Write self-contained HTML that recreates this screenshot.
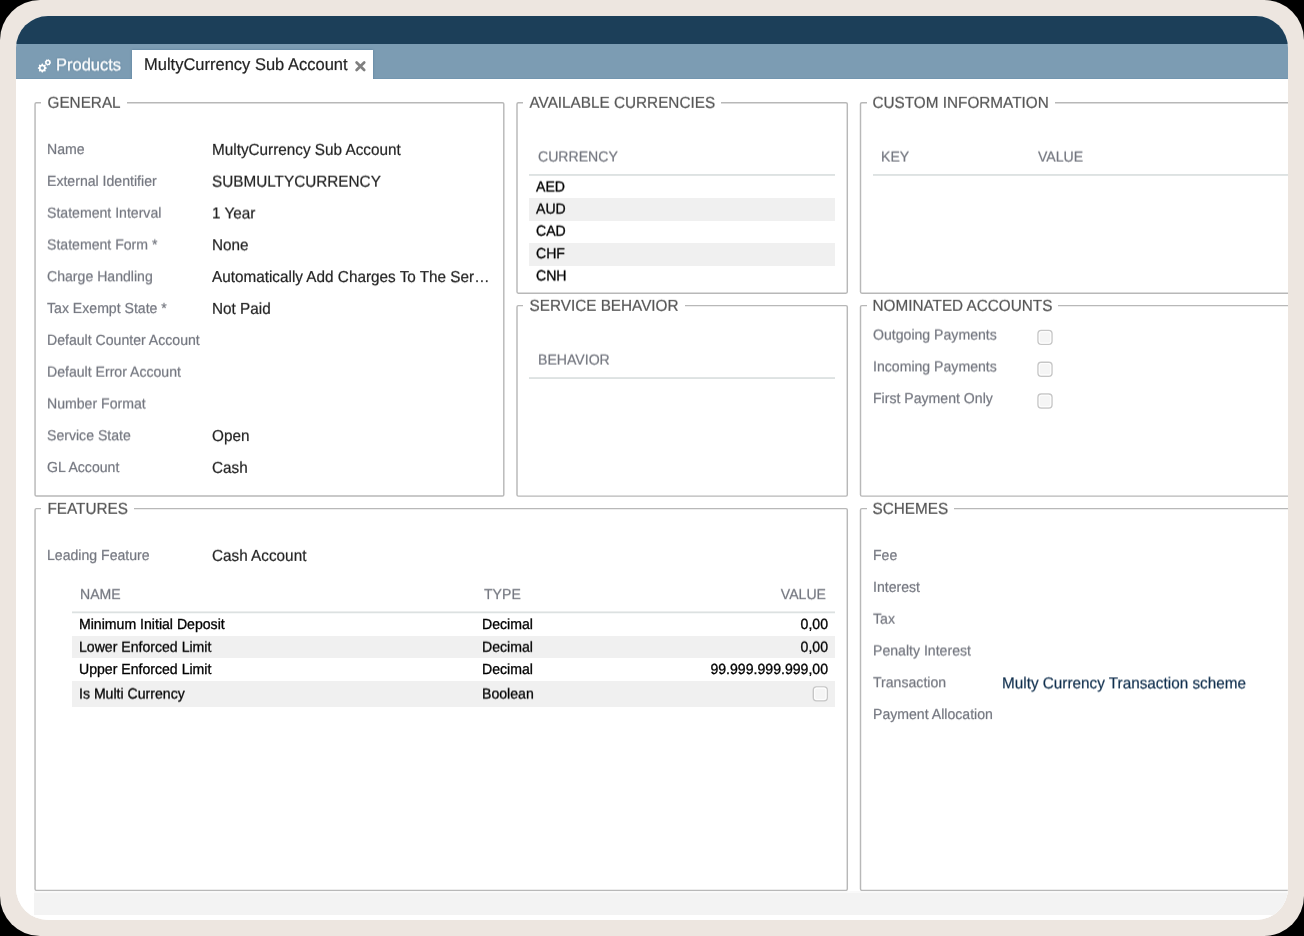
<!DOCTYPE html>
<html>
<head>
<meta charset="utf-8">
<title>MultyCurrency Sub Account</title>
<style>
*{box-sizing:border-box;margin:0;padding:0}
html,body{width:1304px;height:936px;overflow:hidden;background:#000;}
body{font-family:"Liberation Sans",sans-serif;position:relative;text-rendering:geometricPrecision;}
#outer{position:absolute;left:0;top:0;width:1304px;height:936px;background:#ede6e0;border-radius:40px;}
#app{position:absolute;left:16px;top:16px;width:1272px;height:904px;background:#fff;border-radius:32px;overflow:hidden;}
#pg{position:absolute;left:-16px;top:-16px;width:1304px;height:936px;will-change:transform;}
#topbar{position:absolute;left:16px;top:16px;width:1272px;height:28px;background:#1c3f59;}
#tabbar{position:absolute;left:16px;top:44px;width:1272px;height:35px;background:#7c9cb3;border-bottom:1px solid #7396b0;}
.a{position:absolute;white-space:nowrap;}
#tab1{transform-origin:50% 76%;color:#fff;font-size:16.5px;line-height:20px;text-shadow:0 0 2px rgba(40,85,120,.55);-webkit-text-stroke:0.3px currentColor;}
#tab2{left:132px;top:50px;width:241px;height:29px;background:#fff;box-shadow:0 0 2px rgba(45,90,130,.5);}
#tab2t{transform-origin:50% 76%;color:#222;font-size:16.5px;line-height:20px;-webkit-text-stroke:0.2px currentColor;}
.fs{position:absolute;border:1px solid #b9b9b9;}
.lg{transform-origin:50% 78%;position:absolute;white-space:nowrap;background:#fff;color:#555;font-size:15.3px;line-height:18px;padding:0 6px 0 6.5px;-webkit-text-stroke:0.2px currentColor;}
.lb{transform-origin:50% 76%;position:absolute;white-space:nowrap;color:#73767f;font-size:14.1px;line-height:18px;-webkit-text-stroke:0.2px currentColor;}
.vl{transform-origin:50% 78%;position:absolute;white-space:nowrap;color:#222;font-size:15.3px;line-height:18px;-webkit-text-stroke:0.2px currentColor;}
.th{transform-origin:50% 76%;position:absolute;white-space:nowrap;color:#73767f;font-size:14.1px;line-height:18px;-webkit-text-stroke:0.2px currentColor;}
.td{transform-origin:50% 76%;position:absolute;white-space:nowrap;color:#000;font-size:14.1px;line-height:18px;-webkit-text-stroke:0.32px currentColor;}
.hl{position:absolute;height:1px;background:#d3dada;}
.row{position:absolute;background:#f0f0f0;}
.cb{position:absolute;width:14px;height:14px;border:1px solid #c6c6c6;border-radius:3px;background:#f5f5f5;}
#foot{position:absolute;left:34.2px;top:891.4px;width:1254px;height:23.3px;background:linear-gradient(#f9f9f9 0,#f9f9f9 1.5px,#f3f3f3 1.6px);}
</style>
</head>
<body>
<div id="outer"></div>
<div id="app"><div id="pg">
<div id="topbar"></div><div id="tabbar"></div>
<div class="a" id="tab1" style="left:55.5px;top:55px;transform:translate3d(0,0.9px,0) rotate(0.02deg) scaleY(1.03);will-change:transform;">Products</div>
<div class="a" id="tab2"></div>
<div class="a" style="left:16px;top:79px;width:1272px;height:841px;background:#fff;"></div>
<div class="a" id="tab2t" style="left:143.7px;top:55px;transform:translate3d(0,0.5px,0) rotate(0.02deg) scaleY(1.03);will-change:transform;">MultyCurrency Sub Account</div>
<svg class="a" style="left:32px;top:52px;" width="30" height="24" viewBox="32 52 30 24" fill="#fff"><path fill-rule="evenodd" d="M46.78,67.66 L46.78,68.54 L45.65,69.12 L45.39,69.75 L45.78,70.95 L45.15,71.58 L43.95,71.19 L43.32,71.45 L42.74,72.58 L41.86,72.58 L41.28,71.45 L40.65,71.19 L39.45,71.58 L38.82,70.95 L39.21,69.75 L38.95,69.12 L37.82,68.54 L37.82,67.66 L38.95,67.08 L39.21,66.45 L38.82,65.25 L39.45,64.62 L40.65,65.01 L41.28,64.75 L41.86,63.62 L42.74,63.62 L43.32,64.75 L43.95,65.01 L45.15,64.62 L45.78,65.25 L45.39,66.45 L45.65,67.08Z M40.55,68.10 a1.75,1.75 0 1,0 3.50,0 a1.75,1.75 0 1,0 -3.50,0Z"/><path fill-rule="evenodd" d="M51.03,62.72 L50.91,63.33 L50.32,63.71 L50.02,64.15 L49.89,64.84 L49.37,65.18 L48.69,65.03 L48.16,65.14 L47.58,65.53 L46.97,65.41 L46.59,64.82 L46.15,64.52 L45.46,64.39 L45.12,63.87 L45.27,63.19 L45.16,62.66 L44.77,62.08 L44.89,61.47 L45.48,61.09 L45.78,60.65 L45.91,59.96 L46.43,59.62 L47.11,59.77 L47.64,59.66 L48.22,59.27 L48.83,59.39 L49.21,59.98 L49.65,60.28 L50.34,60.41 L50.68,60.93 L50.53,61.61 L50.64,62.14Z M46.65,62.40 a1.25,1.25 0 1,0 2.50,0 a1.25,1.25 0 1,0 -2.50,0Z"/></svg>
<svg class="a" style="left:350px;top:56px;" width="20" height="20" viewBox="350 56 20 20"><path d="M356.6 62.5 L364.2 70.0 M364.2 62.5 L356.6 70.0" stroke="#808080" stroke-width="2.7" stroke-linecap="round" fill="none"/></svg>
<svg class="a" style="left:0;top:0;" width="1304" height="936"><rect x="35.05" y="102.7" width="468.75" height="393.40" rx="1.4" fill="none" stroke="#b8b8b8" stroke-width="1.45"/></svg>
<div class="lg" style="left:41px;top:94px;transform:translate3d(0,0.4px,0) rotate(0.02deg) scaleY(1.04);will-change:transform;padding-left:6.5px;">GENERAL</div>
<div class="lb" style="left:47.4px;top:139px;transform:translate3d(0,0.65px,0) rotate(0.02deg) scaleY(1.04);will-change:transform;">Name</div>
<div class="vl" style="left:212px;top:141px;transform:translate3d(0,0.45px,0) rotate(0.02deg) scaleY(1.04);will-change:transform;">MultyCurrency Sub Account</div>
<div class="lb" style="left:47.4px;top:171px;transform:translate3d(0,0.45px,0) rotate(0.02deg) scaleY(1.04);will-change:transform;">External Identifier</div>
<div class="vl" style="left:212px;top:173px;transform:translate3d(0,0.25px,0) rotate(0.02deg) scaleY(1.04);will-change:transform;">SUBMULTYCURRENCY</div>
<div class="lb" style="left:47.4px;top:203px;transform:translate3d(0,0.25px,0) rotate(0.02deg) scaleY(1.04);will-change:transform;">Statement Interval</div>
<div class="vl" style="left:212px;top:205px;transform:translate3d(0,0.05px,0) rotate(0.02deg) scaleY(1.04);will-change:transform;">1 Year</div>
<div class="lb" style="left:47.4px;top:235px;transform:translate3d(0,0.05px,0) rotate(0.02deg) scaleY(1.04);will-change:transform;">Statement Form *</div>
<div class="vl" style="left:212px;top:236px;transform:translate3d(0,0.85px,0) rotate(0.02deg) scaleY(1.04);will-change:transform;">None</div>
<div class="lb" style="left:47.4px;top:266px;transform:translate3d(0,0.85px,0) rotate(0.02deg) scaleY(1.04);will-change:transform;">Charge Handling</div>
<div class="vl" style="left:212px;top:268px;transform:translate3d(0,0.65px,0) rotate(0.02deg) scaleY(1.04);will-change:transform;">Automatically Add Charges To The Ser…</div>
<div class="lb" style="left:47.4px;top:298px;transform:translate3d(0,0.65px,0) rotate(0.02deg) scaleY(1.04);will-change:transform;">Tax Exempt State *</div>
<div class="vl" style="left:212px;top:300px;transform:translate3d(0,0.45px,0) rotate(0.02deg) scaleY(1.04);will-change:transform;">Not Paid</div>
<div class="lb" style="left:47.4px;top:330px;transform:translate3d(0,0.45px,0) rotate(0.02deg) scaleY(1.04);will-change:transform;">Default Counter Account</div>
<div class="lb" style="left:47.4px;top:362px;transform:translate3d(0,0.25px,0) rotate(0.02deg) scaleY(1.04);will-change:transform;">Default Error Account</div>
<div class="lb" style="left:47.4px;top:394px;transform:translate3d(0,0.05px,0) rotate(0.02deg) scaleY(1.04);will-change:transform;">Number Format</div>
<div class="lb" style="left:47.4px;top:425px;transform:translate3d(0,0.85px,0) rotate(0.02deg) scaleY(1.04);will-change:transform;">Service State</div>
<div class="vl" style="left:212px;top:427px;transform:translate3d(0,0.65px,0) rotate(0.02deg) scaleY(1.04);will-change:transform;">Open</div>
<div class="lb" style="left:47.4px;top:457px;transform:translate3d(0,0.65px,0) rotate(0.02deg) scaleY(1.04);will-change:transform;">GL Account</div>
<div class="vl" style="left:212px;top:459px;transform:translate3d(0,0.45px,0) rotate(0.02deg) scaleY(1.04);will-change:transform;">Cash</div>
<svg class="a" style="left:0;top:0;" width="1304" height="936"><rect x="517.0" y="102.7" width="330.30" height="190.50" rx="1.4" fill="none" stroke="#b8b8b8" stroke-width="1.45"/></svg>
<div class="lg" style="left:523px;top:94px;transform:translate3d(0,0.4px,0) rotate(0.02deg) scaleY(1.04);will-change:transform;padding-left:6.5px;">AVAILABLE CURRENCIES</div>
<div class="th" style="left:537.8px;top:147px;transform:translate3d(0,0.05px,0) rotate(0.02deg) scaleY(1.04);will-change:transform;">CURRENCY</div>
<svg class="a" style="left:0;top:171px;" width="1304" height="7" viewBox="0 171 1304 7"><rect x="529" y="174.05" width="306" height="1.8" fill="#dce1e1"/></svg>
<div class="td" style="left:536.2px;top:177px;transform:translate3d(0,0.05px,0) rotate(0.02deg) scaleY(1.04);will-change:transform;">AED</div>
<div class="row" style="left:529px;top:198px;width:306px;height:22.5px;"></div>
<div class="td" style="left:536.2px;top:199px;transform:translate3d(0,0.15px,0) rotate(0.02deg) scaleY(1.04);will-change:transform;text-shadow:0 0 1.5px #fff,0 0 1.5px #fff;">AUD</div>
<div class="td" style="left:536.2px;top:221px;transform:translate3d(0,0.25px,0) rotate(0.02deg) scaleY(1.04);will-change:transform;">CAD</div>
<div class="row" style="left:529px;top:243px;width:306px;height:22.5px;"></div>
<div class="td" style="left:536.2px;top:243px;transform:translate3d(0,0.85px,0) rotate(0.02deg) scaleY(1.04);will-change:transform;text-shadow:0 0 1.5px #fff,0 0 1.5px #fff;">CHF</div>
<div class="td" style="left:536.2px;top:266px;transform:translate3d(0,0.05px,0) rotate(0.02deg) scaleY(1.04);will-change:transform;">CNH</div>
<svg class="a" style="left:0;top:0;" width="1304" height="936"><rect x="860.5" y="102.7" width="469.50" height="190.50" rx="1.4" fill="none" stroke="#b8b8b8" stroke-width="1.45"/></svg>
<div class="lg" style="left:867px;top:94px;transform:translate3d(0,0.4px,0) rotate(0.02deg) scaleY(1.04);will-change:transform;padding-left:5.5px;">CUSTOM INFORMATION</div>
<div class="th" style="left:881px;top:147px;transform:translate3d(0,0.15px,0) rotate(0.02deg) scaleY(1.04);will-change:transform;">KEY</div>
<div class="th" style="left:1038px;top:147px;transform:translate3d(0,0.15px,0) rotate(0.02deg) scaleY(1.04);will-change:transform;">VALUE</div>
<svg class="a" style="left:0;top:171px;" width="1304" height="7" viewBox="0 171 1304 7"><rect x="873" y="174.05" width="427" height="1.8" fill="#dce1e1"/></svg>
<svg class="a" style="left:0;top:0;" width="1304" height="936"><rect x="517.0" y="305.6" width="330.30" height="190.50" rx="1.4" fill="none" stroke="#b8b8b8" stroke-width="1.45"/></svg>
<div class="lg" style="left:523px;top:297px;transform:translate3d(0,0.4px,0) rotate(0.02deg) scaleY(1.04);will-change:transform;padding-left:6.5px;">SERVICE BEHAVIOR</div>
<div class="th" style="left:537.7px;top:350px;transform:translate3d(0,0.15px,0) rotate(0.02deg) scaleY(1.04);will-change:transform;">BEHAVIOR</div>
<svg class="a" style="left:0;top:375px;" width="1304" height="7" viewBox="0 375 1304 7"><rect x="529" y="377.15" width="306" height="1.8" fill="#dce1e1"/></svg>
<svg class="a" style="left:0;top:0;" width="1304" height="936"><rect x="860.5" y="305.6" width="469.50" height="190.50" rx="1.4" fill="none" stroke="#b8b8b8" stroke-width="1.45"/></svg>
<div class="lg" style="left:867px;top:297px;transform:translate3d(0,0.4px,0) rotate(0.02deg) scaleY(1.04);will-change:transform;padding-left:5.5px;">NOMINATED ACCOUNTS</div>
<div class="lb" style="left:873.05px;top:325px;transform:translate3d(0,0.15px,0) rotate(0.02deg) scaleY(1.04);will-change:transform;">Outgoing Payments</div>
<svg class="a" style="left:1035px;top:327px;" width="22" height="22" viewBox="1035 327 22 22"><rect x="1038.0" y="330.4" width="14" height="14" rx="3.3" fill="#f5f5f5" stroke="#c6c6c6" stroke-width="1.4"/><rect x="1039.3" y="331.7" width="11.4" height="11.4" rx="2.2" fill="none" stroke="#fff" stroke-opacity=".85" stroke-width="1.1"/></svg>
<div class="lb" style="left:873.05px;top:357px;transform:translate3d(0,0px,0) rotate(0.02deg) scaleY(1.04);will-change:transform;">Incoming Payments</div>
<svg class="a" style="left:1035px;top:359px;" width="22" height="22" viewBox="1035 359 22 22"><rect x="1038.0" y="362.2" width="14" height="14" rx="3.3" fill="#f5f5f5" stroke="#c6c6c6" stroke-width="1.4"/><rect x="1039.3" y="363.5" width="11.4" height="11.4" rx="2.2" fill="none" stroke="#fff" stroke-opacity=".85" stroke-width="1.1"/></svg>
<div class="lb" style="left:873.05px;top:388px;transform:translate3d(0,0.75px,0) rotate(0.02deg) scaleY(1.04);will-change:transform;">First Payment Only</div>
<svg class="a" style="left:1035px;top:391px;" width="22" height="22" viewBox="1035 391 22 22"><rect x="1038.0" y="394.0" width="14" height="14" rx="3.3" fill="#f5f5f5" stroke="#c6c6c6" stroke-width="1.4"/><rect x="1039.3" y="395.3" width="11.4" height="11.4" rx="2.2" fill="none" stroke="#fff" stroke-opacity=".85" stroke-width="1.1"/></svg>
<svg class="a" style="left:0;top:0;" width="1304" height="936"><rect x="35.05" y="508.6" width="812.25" height="381.80" rx="1.4" fill="none" stroke="#b8b8b8" stroke-width="1.45"/></svg>
<div class="lg" style="left:41px;top:500px;transform:translate3d(0,0.4px,0) rotate(0.02deg) scaleY(1.04);will-change:transform;padding-left:6.5px;">FEATURES</div>
<div class="lb" style="left:47.4px;top:545px;transform:translate3d(0,0.65px,0) rotate(0.02deg) scaleY(1.04);will-change:transform;">Leading Feature</div>
<div class="vl" style="left:212px;top:547px;transform:translate3d(0,0.45px,0) rotate(0.02deg) scaleY(1.04);will-change:transform;">Cash Account</div>
<div class="th" style="left:80px;top:584px;transform:translate3d(0,0.75px,0) rotate(0.02deg) scaleY(1.04);will-change:transform;">NAME</div>
<div class="th" style="left:484px;top:584px;transform:translate3d(0,0.75px,0) rotate(0.02deg) scaleY(1.04);will-change:transform;">TYPE</div>
<div class="th" style="left:700px;top:584px;transform:translate3d(0,0.75px,0) rotate(0.02deg) scaleY(1.04);will-change:transform;width:126px;text-align:right;">VALUE</div>
<svg class="a" style="left:0;top:609px;" width="1304" height="7" viewBox="0 609 1304 7"><rect x="72" y="611.45" width="763" height="1.8" fill="#dce1e1"/></svg>
<div class="td" style="left:79px;top:614px;transform:translate3d(0,0.55px,0) rotate(0.02deg) scaleY(1.04);will-change:transform;">Minimum Initial Deposit</div>
<div class="td" style="left:482px;top:614px;transform:translate3d(0,0.55px,0) rotate(0.02deg) scaleY(1.04);will-change:transform;">Decimal</div>
<div class="td" style="left:628px;top:614px;transform:translate3d(0,0.55px,0) rotate(0.02deg) scaleY(1.04);will-change:transform;width:200px;text-align:right;">0,00</div>
<div class="row" style="left:72px;top:635.5px;width:763px;height:22.5px;"></div>
<div class="td" style="left:79px;top:637px;transform:translate3d(0,0.35px,0) rotate(0.02deg) scaleY(1.04);will-change:transform;text-shadow:0 0 1.5px #fff,0 0 1.5px #fff;">Lower Enforced Limit</div>
<div class="td" style="left:482px;top:637px;transform:translate3d(0,0.35px,0) rotate(0.02deg) scaleY(1.04);will-change:transform;text-shadow:0 0 1.5px #fff,0 0 1.5px #fff;">Decimal</div>
<div class="td" style="left:628px;top:637px;transform:translate3d(0,0.35px,0) rotate(0.02deg) scaleY(1.04);will-change:transform;width:200px;text-align:right;text-shadow:0 0 1.5px #fff,0 0 1.5px #fff;">0,00</div>
<div class="td" style="left:79px;top:659px;transform:translate3d(0,0.55px,0) rotate(0.02deg) scaleY(1.04);will-change:transform;">Upper Enforced Limit</div>
<div class="td" style="left:482px;top:659px;transform:translate3d(0,0.55px,0) rotate(0.02deg) scaleY(1.04);will-change:transform;">Decimal</div>
<div class="td" style="left:628px;top:659px;transform:translate3d(0,0.55px,0) rotate(0.02deg) scaleY(1.04);will-change:transform;width:200px;text-align:right;">99.999.999.999,00</div>
<div class="row" style="left:72px;top:681px;width:763px;height:25.5px;"></div>
<div class="td" style="left:79px;top:684px;transform:translate3d(0,0.15px,0) rotate(0.02deg) scaleY(1.04);will-change:transform;text-shadow:0 0 1.5px #fff,0 0 1.5px #fff;">Is Multi Currency</div>
<div class="td" style="left:482px;top:684px;transform:translate3d(0,0.15px,0) rotate(0.02deg) scaleY(1.04);will-change:transform;text-shadow:0 0 1.5px #fff,0 0 1.5px #fff;">Boolean</div>
<svg class="a" style="left:810px;top:683px;" width="22" height="22" viewBox="810 683 22 22"><rect x="813.3" y="686.85" width="14" height="14" rx="3.3" fill="#f5f5f5" stroke="#c6c6c6" stroke-width="1.4"/><rect x="814.5999999999999" y="688.15" width="11.4" height="11.4" rx="2.2" fill="none" stroke="#fff" stroke-opacity=".85" stroke-width="1.1"/></svg>
<svg class="a" style="left:0;top:0;" width="1304" height="936"><rect x="860.5" y="508.6" width="469.50" height="381.80" rx="1.4" fill="none" stroke="#b8b8b8" stroke-width="1.45"/></svg>
<div class="lg" style="left:867px;top:500px;transform:translate3d(0,0.4px,0) rotate(0.02deg) scaleY(1.04);will-change:transform;padding-left:5.5px;">SCHEMES</div>
<div class="lb" style="left:873.05px;top:545px;transform:translate3d(0,0.65px,0) rotate(0.02deg) scaleY(1.04);will-change:transform;">Fee</div>
<div class="lb" style="left:873.05px;top:577px;transform:translate3d(0,0.45px,0) rotate(0.02deg) scaleY(1.04);will-change:transform;">Interest</div>
<div class="lb" style="left:873.05px;top:609px;transform:translate3d(0,0.25px,0) rotate(0.02deg) scaleY(1.04);will-change:transform;">Tax</div>
<div class="lb" style="left:873.05px;top:641px;transform:translate3d(0,0.05px,0) rotate(0.02deg) scaleY(1.04);will-change:transform;">Penalty Interest</div>
<div class="lb" style="left:873.05px;top:672px;transform:translate3d(0,0.85px,0) rotate(0.02deg) scaleY(1.04);will-change:transform;">Transaction</div>
<div class="lb" style="left:873.05px;top:704px;transform:translate3d(0,0.65px,0) rotate(0.02deg) scaleY(1.04);will-change:transform;">Payment Allocation</div>
<div class="vl" style="left:1002px;top:675px;transform:translate3d(0,0px,0) rotate(0.02deg) scaleY(1.04);will-change:transform;color:#0f2e4d;">Multy Currency Transaction scheme</div>
<div id="foot"></div>
</div></div>
</body>
</html>
